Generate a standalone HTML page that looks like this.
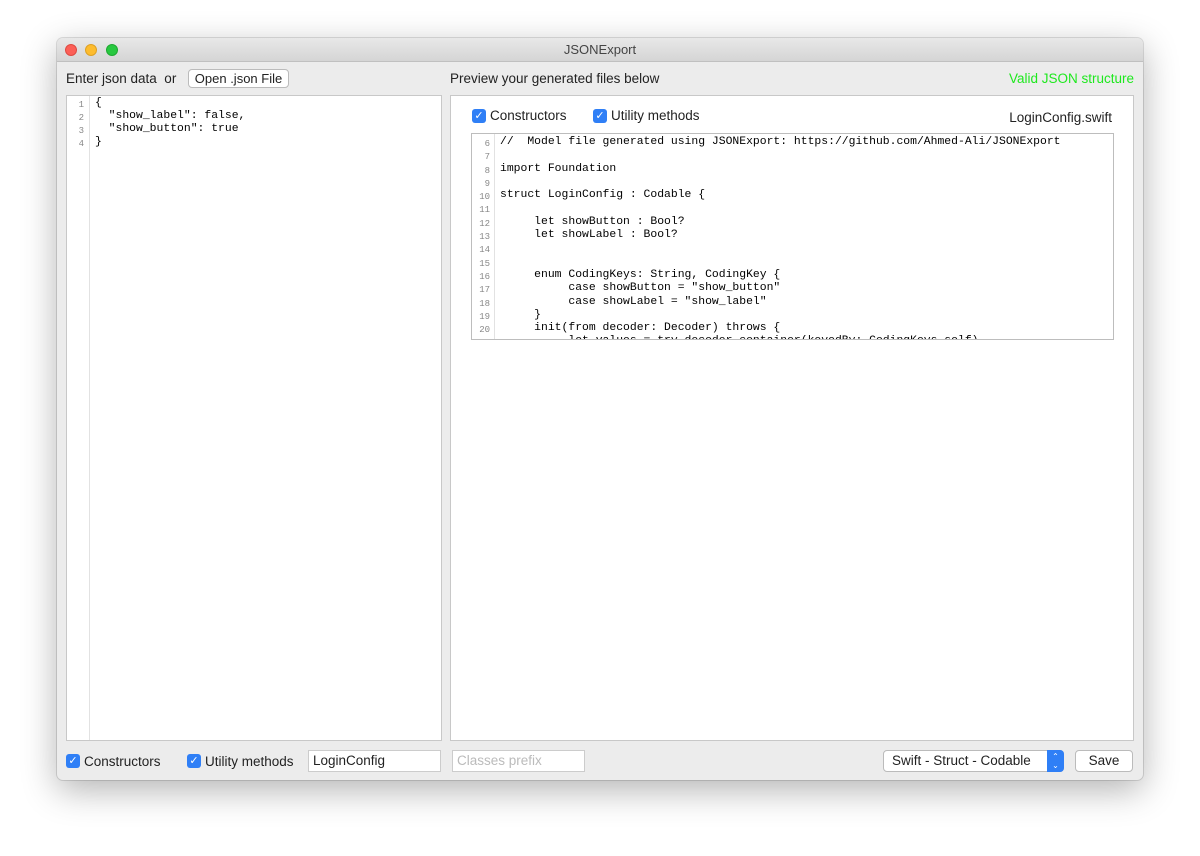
<!DOCTYPE html>
<html><head><style>
*{margin:0;padding:0;box-sizing:border-box}
body{width:1200px;height:856px;background:#fff;font-family:"Liberation Sans",sans-serif;font-size:13.5px;color:#222;position:relative;overflow:hidden}
.win{position:absolute;left:57px;top:38px;width:1086px;height:742px;background:#ececec;border-radius:6px;box-shadow:0 10px 35px rgba(0,0,0,.3),0 0 0 1px rgba(0,0,0,.12)}
.title{height:24px;background:linear-gradient(#e8e8e8,#d5d5d5);border-bottom:1px solid #c0c0c0;border-radius:6px 6px 0 0;text-align:center;font-size:13px;line-height:24px;color:#444}
.dot{position:absolute;top:6px;width:12px;height:12px;border-radius:50%}
.a{position:absolute;white-space:pre}
.panel{position:absolute;background:#fff;border:1px solid #c8c8c8}
.mono{font-family:"Liberation Mono",monospace;font-size:11.4px;white-space:pre;color:#000}
.ln{position:absolute;text-align:right;font-family:"Liberation Mono",monospace;font-size:9px;color:#888;white-space:pre}
.cb{position:absolute;width:14px;height:14px;background:#2f7ff6;border-radius:3px;color:#fff;font-size:11px;line-height:14px;text-align:center}
.btn{position:absolute;background:#fff;border:1px solid #bbb;border-radius:4px;font-size:13px;text-align:center}
.inp{position:absolute;background:#fff;border:1px solid #ccc;font-size:13.5px;padding-left:4px;line-height:20px}
</style></head><body>
<div class="win">
<div class="title">JSONExport</div>
<div class="dot" style="left:8px;background:#fc5f57;border:1px solid #de4a42"></div>
<div class="dot" style="left:28px;background:#fdbc2e;border:1px solid #dea123"></div>
<div class="dot" style="left:49px;background:#28c840;border:1px solid #1fa931"></div>

<div class="a" style="left:9px;top:33px">Enter json data  or</div>
<div class="btn" style="left:131px;top:31px;width:101px;height:19px;line-height:17px">Open .json File</div>
<div class="a" style="left:393px;top:33px">Preview your generated files below</div>
<div class="a" style="right:9px;top:33px;color:#1ee81e">Valid JSON structure</div>

<div class="panel" style="left:9px;top:57px;width:376px;height:646px">
 <div style="position:absolute;left:22px;top:0;bottom:0;border-left:1px solid #e2e2e2"></div>
 <div class="ln" style="left:0;width:17px;top:3px;line-height:13px">1
2
3
4</div>
 <div class="mono" style="position:absolute;left:28px;top:1px;line-height:13px">{
  "show_label": false,
  "show_button": true
}</div>
</div>

<div class="panel" style="left:393px;top:57px;width:684px;height:646px">
 <div class="cb" style="left:21px;top:13px">✓</div>
 <div class="a" style="left:39px;top:12px">Constructors</div>
 <div class="cb" style="left:142px;top:13px">✓</div>
 <div class="a" style="left:160px;top:12px">Utility methods</div>
 <div class="a" style="right:21px;top:14px">LoginConfig.swift</div>
 <div style="position:absolute;left:20px;top:37px;width:643px;height:207px;border:1px solid #bdbdbd;overflow:hidden">
  <div style="position:absolute;left:22px;top:0;bottom:0;border-left:1px solid #e2e2e2"></div>
  <div class="ln" style="left:0;width:18px;top:4px;line-height:13.3px">6
7
8
9
10
11
12
13
14
15
16
17
18
19
20
21</div>
  <div class="mono" style="position:absolute;left:28px;top:2px;line-height:13.3px">//  Model file generated using JSONExport: https://github.com/Ahmed-Ali/JSONExport

import Foundation

struct LoginConfig : Codable {

     let showButton : Bool?
     let showLabel : Bool?


     enum CodingKeys: String, CodingKey {
          case showButton = "show_button"
          case showLabel = "show_label"
     }
     init(from decoder: Decoder) throws {
          let values = try decoder.container(keyedBy: CodingKeys.self)</div>
 </div>
</div>

<div class="cb" style="left:9px;top:716px">✓</div>
<div class="a" style="left:27px;top:716px">Constructors</div>
<div class="cb" style="left:130px;top:716px">✓</div>
<div class="a" style="left:148px;top:716px">Utility methods</div>
<div class="inp" style="left:251px;top:712px;width:133px;height:22px">LoginConfig</div>
<div class="inp" style="left:395px;top:712px;width:133px;height:22px;color:#bbb">Classes prefix</div>
<div class="btn" style="left:826px;top:712px;width:181px;height:22px;line-height:20px;text-align:left;padding-left:8px;border-radius:4px;font-size:13.5px">Swift - Struct - Codable
 <div style="position:absolute;right:-1px;top:-1px;width:17px;height:22px;background:#2f7ff6;border-radius:0 4px 4px 0;color:#fff;font-size:8px;line-height:9px;text-align:center;padding-top:2px">⌃<br>⌄</div>
</div>
<div class="btn" style="left:1018px;top:712px;width:58px;height:22px;line-height:20px;font-size:13.5px">Save</div>
</div>
</body></html>
